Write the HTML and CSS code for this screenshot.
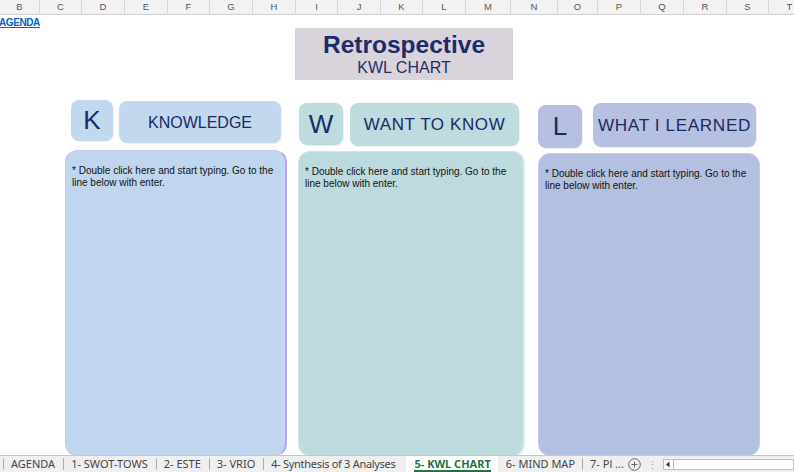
FILE: index.html
```html
<!DOCTYPE html>
<html>
<head>
<meta charset="utf-8">
<link rel="stylesheet" href="styles.css">
</head>
<body>
<div class="colhead">
  <div class="ch w40">B</div><div class="ch w42">C</div><div class="ch w43">D</div><div class="ch w43">E</div><div class="ch w42">F</div><div class="ch w43">G</div><div class="ch w43">H</div><div class="ch w42">I</div><div class="ch w43">J</div><div class="ch w42">K</div><div class="ch w43">L</div><div class="ch w45">M</div><div class="ch w47">N</div><div class="ch w40">O</div><div class="ch w43">P</div><div class="ch w43">Q</div><div class="ch w43">R</div><div class="ch w42">S</div><div class="ch w42">T</div>
</div>
<div class="sheet">
  <a class="agenda" href="#">AGENDA</a>
  <div class="title">
    <div class="t1">Retrospective</div>
    <div class="t2">KWL CHART</div>
  </div>
  <div class="kwl">
    <div class="col col-k">
      <div class="head">
        <div class="letter">K</div>
        <div class="label">KNOWLEDGE</div>
      </div>
      <div class="body">* Double click here and start typing. Go to the line below with enter.</div>
    </div>
    <div class="col col-w">
      <div class="head">
        <div class="letter">W</div>
        <div class="label">WANT TO KNOW</div>
      </div>
      <div class="body">* Double click here and start typing. Go to the line below with enter.</div>
    </div>
    <div class="col col-l">
      <div class="head">
        <div class="letter">L</div>
        <div class="label">WHAT I LEARNED</div>
      </div>
      <div class="body">* Double click here and start typing. Go to the line below with enter.</div>
    </div>
  </div>
</div>
<div class="tabs">
  <div class="tab first">AGENDA</div>
  <div class="tab">1- SWOT-TOWS</div>
  <div class="tab">2- ESTE</div>
  <div class="tab">3- VRIO</div>
  <div class="tab tight">4- Synthesis of 3 Analyses</div>
  <div class="tab active"><span>5- KWL CHART</span></div>
  <div class="tab nosep">6- MIND MAP</div>
  <div class="tab last">7- Pl ...</div>
  <div class="plus"><svg width="13" height="13" viewBox="0 0 13 13"><circle cx="6.5" cy="6.5" r="5.8" fill="none" stroke="#666" stroke-width="1"/><path d="M6.5 3.5v6M3.5 6.5h6" stroke="#666" stroke-width="1"/></svg></div>
  <div class="dots">&#8942;</div>
  <div class="scroll">
    <div class="arrow"><svg width="6" height="7" viewBox="0 0 6 7"><path d="M4.5 0.5v6L1 3.5z" fill="#333"/></svg></div>
    <div class="track"></div>
  </div>
</div>
</body>
</html>
```
FILE: styles.css
```css
html, body {
  margin: 0;
  padding: 0;
  background: #ffffff;
  width: 794px;
  height: 472px;
  overflow: hidden;
  font-family: "Liberation Sans", Arial, sans-serif;
}

.colhead {
  display: flex;
  height: 14px;
  background: #f2f2f2;
  border-bottom: 1px solid #d0d0d0;
  white-space: nowrap;
  overflow: hidden;
}
.ch {
  flex: none;
  box-sizing: border-box;
  border-right: 1px solid #d6d6d6;
  text-align: center;
  font-size: 9.5px;
  line-height: 14px;
  color: #555;
}
.w40 { width: 40px; }
.w42 { width: 42px; }
.w43 { width: 43px; }
.w45 { width: 45px; }
.w47 { width: 47px; }

.sheet {
  height: 440px;
  overflow: hidden;
}

.agenda {
  display: block;
  margin-left: -1px;
  height: 13px;
  font-size: 10px;
  line-height: 15px;
  font-weight: bold;
  color: #0563c1;
  text-decoration: underline;
  letter-spacing: -0.4px;
}

.title {
  margin-left: 295px;
  width: 218px;
  height: 52px;
  background: #d9d3dc;
  text-align: center;
  color: #1c2c68;
  box-sizing: border-box;
  padding-top: 3px;
}
.t1 {
  font-size: 24.5px;
  font-weight: bold;
  line-height: 28px;
}
.t2 {
  font-size: 16px;
  line-height: 18px;
  color: #1f2f66;
}

.kwl {
  display: flex;
  margin-top: 20px;
  padding-left: 65px;
  height: 356px;
}
.col {
  display: flex;
  flex-direction: column;
  flex: none;
}
.col-k { width: 222px; }
.col-w { width: 227px; margin-left: 11px; }
.col-l { width: 222px; margin-left: 13px; }

.head {
  display: flex;
  align-items: flex-start;
  flex: none;
}
.letter, .label {
  box-sizing: border-box;
  border-radius: 8px;
  display: flex;
  align-items: center;
  justify-content: center;
  color: #1a2a62;
  box-shadow: 1px 1px 0 rgba(60, 70, 110, 0.08);
}
.letter {
  font-size: 26px;
}
.label {
  font-size: 17px;
}

.col-k .head { height: 43px; }
.col-k .letter { width: 42px; height: 41px; margin-left: 6px; background: #c1d8ef; }
.col-k .label { width: 162px; height: 42px; margin-left: 6px; margin-top: 1px; background: #c2d8ef; font-size: 16px; padding-top: 1px; }
.col-k .body { margin-top: 7px; background: #c0d6ee; border: 1px solid #cbc7ee; border-right: 2px solid #bca4ea; }

.col-w .head { height: 43px; margin-top: 3px; }
.col-w .letter { width: 44px; height: 42px; margin-left: 1px; background: #bedbdf; }
.col-w .label { width: 169px; height: 43px; margin-left: 7px; background: #bedbdf; letter-spacing: 0.6px; }
.col-w .body { margin-top: 5px; background: #bddbdf; border: 1px solid #d0e5e8; border-right: 2px solid #dcecef; }

.col-l .head { height: 45px; margin-top: 3px; }
.col-l .letter { width: 44px; height: 43px; margin-top: 2px; background: #b5c0e0; }
.col-l .label { width: 163px; height: 44px; margin-left: 11px; background: #b6c1e1; letter-spacing: 0.6px; font-size: 17.2px; }
.col-l .body { margin-top: 5px; background: #b4c0df; border: 1px solid #c3cbe7; }

.body {
  flex: 1;
  box-sizing: border-box;
  border-radius: 12px;
  padding: 14px 6px 0 6px;
  font-size: 10px;
  line-height: 12px;
  color: #111;
}

.tabs {
  display: flex;
  align-items: stretch;
  height: 16px;
  background: #efefef;
  border-top: 1px solid #c8c8c8;
  font-family: "Noto Sans", "Liberation Sans", sans-serif;
  font-size: 11px;
  color: #444;
  white-space: nowrap;
  overflow: hidden;
}
.tab {
  flex: none;
  display: flex;
  align-items: center;
  padding: 0 8px 0 7px;
  border-left: 1px solid #aaa;
  margin: 2px 0;
  line-height: 12px;
}
.tab.first { margin-left: 3px; }
.tab.tight { letter-spacing: -0.3px; }
.tab.active {
  margin: 0 0 0 3px;
  padding: 0 7px 0 8px;
  background: #ffffff;
  border-left: none;
  color: #217346;
  font-weight: bold;
}
.tab.active span {
  border-bottom: 2px solid #217346;
  line-height: 13px;
  padding-top: 1px;
}
.tab.nosep { border-left: none; padding-left: 8px; padding-right: 7px; }
.tab.last { padding-right: 3px; }
.plus {
  display: flex;
  align-items: center;
  margin-left: 1px;
}
.dots {
  display: flex;
  align-items: center;
  margin-left: 6px;
  color: #999;
  font-size: 11px;
}
.scroll {
  display: flex;
  align-items: center;
  margin-left: 5px;
  flex: 1;
}
.arrow {
  width: 11px;
  height: 11px;
  box-sizing: border-box;
  border: 1px solid #bdbdbd;
  background: #fff;
  display: flex;
  align-items: center;
  justify-content: center;
}
.track {
  flex: 1;
  height: 11px;
  box-sizing: border-box;
  border: 1px solid #bdbdbd;
  border-left: none;
  background: #fff;
}
```
